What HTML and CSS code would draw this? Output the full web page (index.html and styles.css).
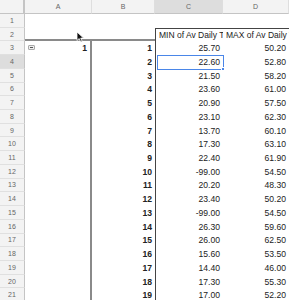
FILE: index.html
```html
<!DOCTYPE html>
<html lang="en">

<head>
    <meta charset="UTF-8">
    <meta name="viewport" content="width=device-width, initial-scale=1.0">
    <title>Pivot table</title>
    <link rel="stylesheet" href="styles.css">
</head>

<body>
    <div class="sheet">
        <!-- column headers -->
        <div class="corner"></div>
        <div class="colhead">A</div>
        <div class="colhead">B</div>
        <div class="colhead active">C</div>
        <div class="colhead">D</div>

        <!-- row 1 -->
        <div class="rowhead">1</div>
        <div class="cell"></div>
        <div class="cell"></div>
        <div class="cell"></div>
        <div class="cell"></div>

        <!-- row 2 : pivot headers -->
        <div class="rowhead">2</div>
        <div class="cell pv-bottom"></div>
        <div class="cell pv-bottom"></div>
        <div class="cell pv-top pv-left label"><span>MIN of Av Daily Temp</span></div>
        <div class="cell pv-top label"><span>MAX of Av Daily Temp</span></div>

        <!-- row 3 -->
        <div class="rowhead">3</div>
        <div class="cell pv-right num bold"><span class="toggle"></span>1</div>
        <div class="cell num bold">1</div>
        <div class="cell pv-left num">25.70</div>
        <div class="cell num">50.20</div>

        <div class="rowhead active">4</div>
        <div class="cell pv-right"></div>
        <div class="cell num bold">2</div>
        <div class="cell pv-left num selected">22.60<span class="handle"></span></div>
        <div class="cell num">52.80</div>

        <div class="rowhead">5</div>
        <div class="cell pv-right"></div>
        <div class="cell num bold">3</div>
        <div class="cell pv-left num">21.50</div>
        <div class="cell num">58.20</div>

        <div class="rowhead">6</div>
        <div class="cell pv-right"></div>
        <div class="cell num bold">4</div>
        <div class="cell pv-left num">23.60</div>
        <div class="cell num">61.00</div>

        <div class="rowhead">7</div>
        <div class="cell pv-right"></div>
        <div class="cell num bold">5</div>
        <div class="cell pv-left num">20.90</div>
        <div class="cell num">57.50</div>

        <div class="rowhead">8</div>
        <div class="cell pv-right"></div>
        <div class="cell num bold">6</div>
        <div class="cell pv-left num">23.10</div>
        <div class="cell num">62.30</div>

        <div class="rowhead">9</div>
        <div class="cell pv-right"></div>
        <div class="cell num bold">7</div>
        <div class="cell pv-left num">13.70</div>
        <div class="cell num">60.10</div>

        <div class="rowhead">10</div>
        <div class="cell pv-right"></div>
        <div class="cell num bold">8</div>
        <div class="cell pv-left num">17.30</div>
        <div class="cell num">63.10</div>

        <div class="rowhead">11</div>
        <div class="cell pv-right"></div>
        <div class="cell num bold">9</div>
        <div class="cell pv-left num">22.40</div>
        <div class="cell num">61.90</div>

        <div class="rowhead">12</div>
        <div class="cell pv-right"></div>
        <div class="cell num bold">10</div>
        <div class="cell pv-left num">-99.00</div>
        <div class="cell num">54.50</div>

        <div class="rowhead">13</div>
        <div class="cell pv-right"></div>
        <div class="cell num bold">11</div>
        <div class="cell pv-left num">20.20</div>
        <div class="cell num">48.30</div>

        <div class="rowhead">14</div>
        <div class="cell pv-right"></div>
        <div class="cell num bold">12</div>
        <div class="cell pv-left num">23.40</div>
        <div class="cell num">50.20</div>

        <div class="rowhead">15</div>
        <div class="cell pv-right"></div>
        <div class="cell num bold">13</div>
        <div class="cell pv-left num">-99.00</div>
        <div class="cell num">54.50</div>

        <div class="rowhead">16</div>
        <div class="cell pv-right"></div>
        <div class="cell num bold">14</div>
        <div class="cell pv-left num">26.30</div>
        <div class="cell num">59.60</div>

        <div class="rowhead">17</div>
        <div class="cell pv-right"></div>
        <div class="cell num bold">15</div>
        <div class="cell pv-left num">26.00</div>
        <div class="cell num">62.50</div>

        <div class="rowhead">18</div>
        <div class="cell pv-right"></div>
        <div class="cell num bold">16</div>
        <div class="cell pv-left num">15.60</div>
        <div class="cell num">53.50</div>

        <div class="rowhead">19</div>
        <div class="cell pv-right"></div>
        <div class="cell num bold">17</div>
        <div class="cell pv-left num">14.40</div>
        <div class="cell num">46.00</div>

        <div class="rowhead">20</div>
        <div class="cell pv-right"></div>
        <div class="cell num bold">18</div>
        <div class="cell pv-left num">17.30</div>
        <div class="cell num">55.30</div>

        <div class="rowhead">21</div>
        <div class="cell pv-right"></div>
        <div class="cell num bold">19</div>
        <div class="cell pv-left num">17.00</div>
        <div class="cell num">52.20</div>

        <!-- mouse pointer over the sheet -->
        <svg class="cursor" width="9" height="12" viewBox="0 0 9 12">
            <path d="M1 1 L1 9.5 L3.2 7.6 L4.8 11 L6.2 10.4 L4.7 7.1 L7.6 7.1 Z" fill="#111" stroke="#fff" stroke-width="0.8" />
        </svg>
    </div>
</body>

</html>
```

FILE: styles.css
```css
* {
    margin: 0;
    padding: 0;
    box-sizing: border-box;
}

body {
    background-color: #fff;
    font-family: "Liberation Sans", Arial, sans-serif;
    overflow: hidden;
}

/* 表格：行号列 + A B C D */
.sheet {
    position: relative;
    display: grid;
    grid-template-columns: 25px 67px 63px 68px 66px;
    grid-template-rows: 14px repeat(21, 13.72px);
    width: 289px;
}

.corner {
    background-color: #f3f3f3;
    border-right: 2px solid #c4c4c4;
    border-bottom: 1px solid #c4c4c4;
}

.colhead {
    display: flex;
    align-items: center;
    justify-content: center;
    background-color: #f3f3f3;
    border-right: 1px solid #dedede;
    border-bottom: 1px solid #c4c4c4;
    font-size: 7px;
    color: #666;
}

.colhead.active {
    background-color: #dddddd;
}

.rowhead {
    display: flex;
    align-items: center;
    justify-content: center;
    background-color: #f3f3f3;
    border-right: 1px solid #c4c4c4;
    border-bottom: 1px solid #e0e0e0;
    font-size: 7px;
    color: #666;
}

.rowhead.active {
    background-color: #dddddd;
}

.cell {
    position: relative;
    display: flex;
    align-items: center;
    padding: 0 3px;
    font-size: 8.6px;
    color: #222;
    white-space: nowrap;
    overflow: hidden;
}

.num {
    justify-content: flex-end;
}

.bold {
    font-weight: bold;
}

/* 标题超出单元格的部分被截掉 */
.label {
    font-size: 8.5px;
    padding: 0 0 0 3px;
}

.label span {
    min-width: 0;
    overflow: hidden;
}

/* 透视表边框 */
.pv-bottom {
    border-bottom: 2px solid #8a8a8a;
}

.pv-right {
    border-right: 2px solid #8a8a8a;
}

.pv-top {
    border-top: 1px solid #444;
}

.pv-left {
    border-left: 1px solid #444;
}

.toggle {
    position: absolute;
    left: 3px;
    top: 4px;
    width: 7px;
    height: 5px;
    border: 1px solid #aaa;
    border-radius: 1px;
    background-color: #eee;
}

.toggle:after {
    content: "";
    position: absolute;
    left: 1px;
    right: 1px;
    top: 1px;
    height: 1px;
    background-color: #555;
}

/* 选中的单元格 */
.selected {
    overflow: visible;
}

.selected:before {
    content: "";
    position: absolute;
    left: 1px;
    right: -1px;
    top: 0;
    bottom: -1px;
    border: 1px solid #4a86e8;
}

.handle {
    position: absolute;
    right: -2px;
    bottom: -2px;
    width: 4px;
    height: 4px;
    background-color: #4a86e8;
    border: 1px solid #fff;
}

.cursor {
    position: absolute;
    left: 76px;
    top: 31px;
}
```
